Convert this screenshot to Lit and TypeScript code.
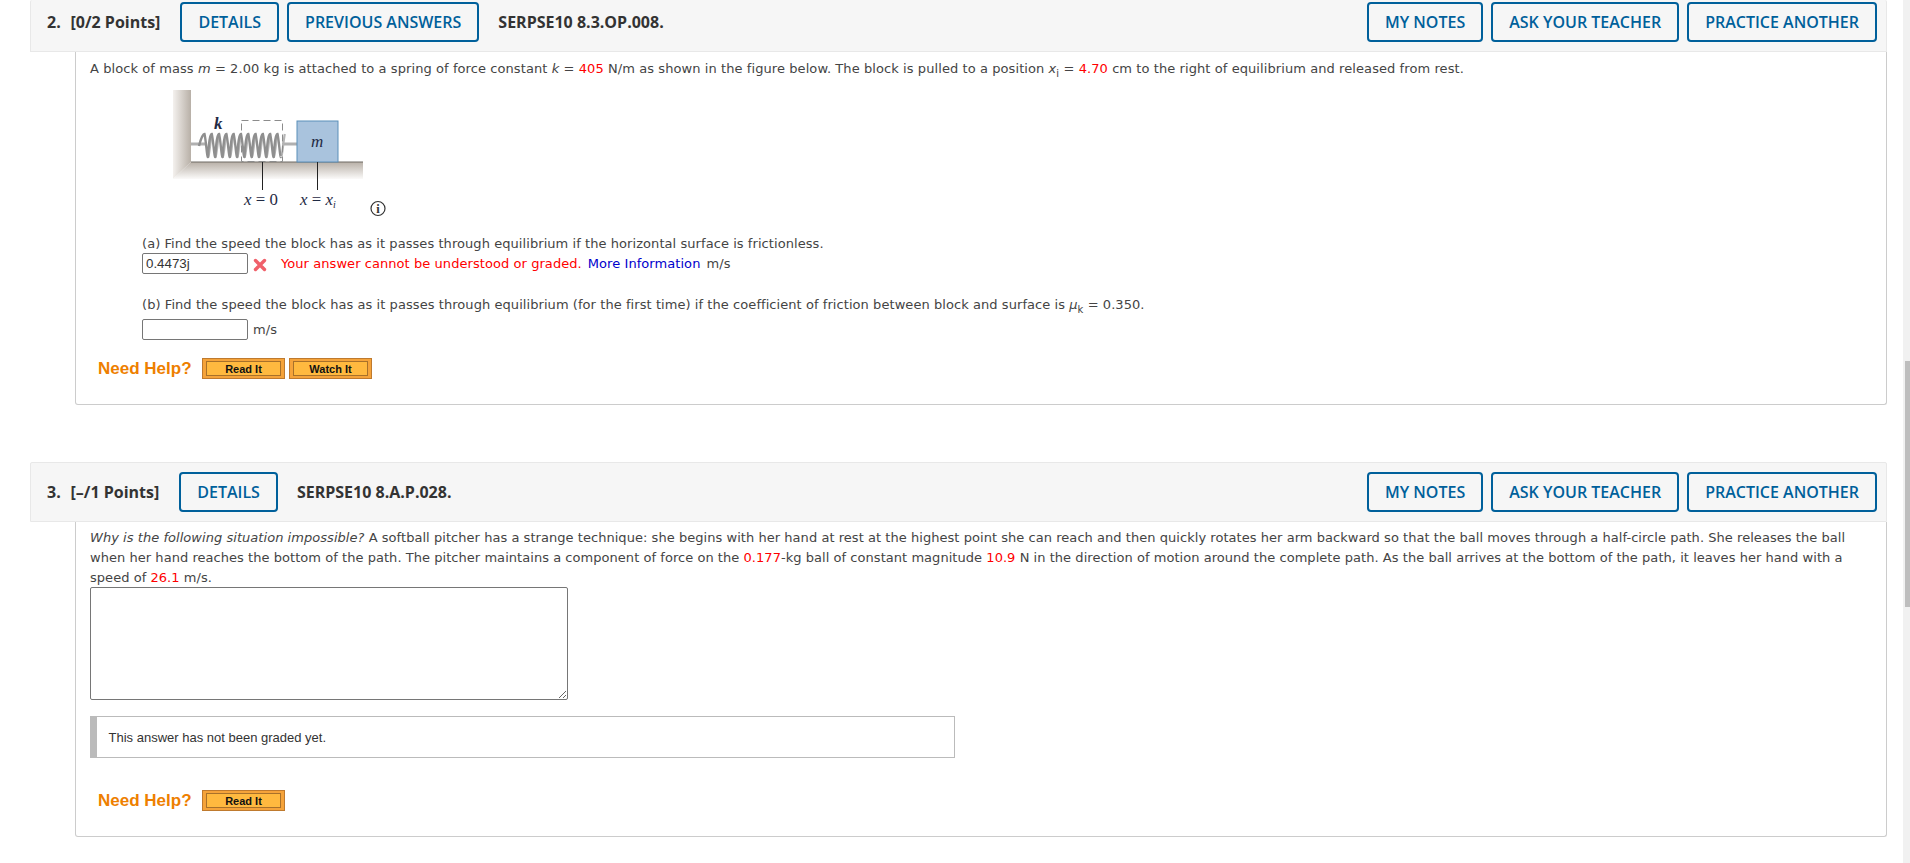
import { LitElement, html, css, svg } from "lit";
import { customElement } from "lit/decorators.js";

function coil() {
  const x0 = 203, pitch = 7.3, n = 11, top = 134, bot = 157;
  let back = "";
  let front = `M${x0 - 4} 146`;
  for (let i = 0; i < n; i++) {
    const x = x0 + i * pitch;
    front += ` C${x - 1} 134 ${x + 1} 134 ${x + 1.5} ${top} C${x + 3} 140 ${x + 4} 158 ${x + 5} ${bot} `;
    back += ` M${x + 5} ${bot} C${x + 6} 158 ${x + 7.5} 140 ${x + 8.8} ${top}`;
  }
  return { front, back };
}

@customElement("app-root")
export class AppRoot extends LitElement {
  static styles = css`
    :host { display: flex; height: 863px; overflow: hidden; background: #fff; color: #444; font-family: "DejaVu Sans", Verdana, sans-serif; font-size: 13px; letter-spacing: .065px; }
    .main { flex: 1; min-width: 0; padding: 0 16px 0 30px; box-sizing: border-box; }
    .scroll { width: 5px; padding-left: 2px; background: #f1f1f1; }
    .thumb { margin-top: 361px; height: 246px; width: 5px; background: #bebebe; }
    .hd { display: flex; align-items: center; background: #f6f6f6; border: 1px solid #e8e8e8; border-radius: 2px 2px 0 0; padding: 9px 9px 9px 16px; font-family: "Open Sans", sans-serif; color: #333; letter-spacing: 0; }
    .hd.first { border-top: 0; padding-top: 2px; }
    .num { font-weight: 700; font-size: 16px; width: 23.5px; }
    .pts { font-weight: 700; font-size: 16px; margin-right: 20px; white-space: nowrap; }
    .code { font-weight: 700; font-size: 16px; margin-left: 11px; white-space: nowrap; }
    .btn { box-sizing: border-box; height: 40px; display: flex; align-items: center; padding: 0 16px; border: 2px solid #00609b; border-radius: 4px; color: #00609b; font-weight: 600; font-size: 16px; margin-right: 8px; white-space: nowrap; }
    .right { margin-left: auto; display: flex; }
    .right .btn:last-child { margin-right: 0; }
    .body { margin-left: 45px; border: 1px solid #ccc; border-top: 0; border-radius: 0 0 3px 3px; padding: 7px 14px 25px; line-height: 20px; white-space: nowrap; }
    .body.second { padding-top: 6px; letter-spacing: .045px; }
    .lead { letter-spacing: .082px; }
    .gap { height: 57px; }
    .red { color: #f00; }
    .blue { color: #00c; }
    i { font-style: italic; }
    sub { font-size: 10px; line-height: 0; }
    .fig { display: block; margin: 6px 0 0 75px; }
    .part { margin-left: 52px; margin-bottom: -1px; }
    .part.a { margin-top: 16px; }
    .part.b { margin-top: 21px; }
    .row { display: flex; align-items: center; height: 21px; margin-left: 52px; }
    .row.b { margin-top: 5px; }
    input { box-sizing: border-box; width: 106px; height: 21px; margin: 0; padding: 1px 3px; border: 1px solid #767676; border-radius: 2px; font: 13.33px "Liberation Sans", Arial, sans-serif; color: #333; background: #fff; letter-spacing: 0; }
    .unit { margin-left: 5px; }
    .after { margin-left: 6px; }
    .x { margin: 3px 14px 0 5px; flex: none; }
    textarea { display: block; box-sizing: border-box; width: 478px; height: 113px; margin: -1px 0 0; border: 1px solid #767676; border-radius: 2px; background: #fff; }
    .msg { box-sizing: border-box; width: 865px; height: 42px; margin-top: 16px; display: flex; align-items: center; padding-left: 11.5px; border: 1px solid #bbb; border-left: 7px solid #bbb; font: 13px "Liberation Sans", Arial, sans-serif; color: #333; letter-spacing: 0; }
    .help { display: flex; align-items: center; height: 21px; margin-left: 8px; margin-top: 18px; letter-spacing: 0; }
    .help.c { margin-top: 32px; }
    .need { font: bold 17px "Liberation Sans", Arial, sans-serif; color: #ee7f00; margin-right: 11px; width: 93px; white-space: nowrap; }
    .ora { box-sizing: border-box; width: 83px; height: 21px; margin-right: 4px; border: 1px solid #bf7a2e; background: #f5a33a; padding: 2px 3px; }
    .ora span { box-sizing: border-box; display: flex; align-items: center; justify-content: center; height: 15px; border: 1px solid #a8712a; background: #ffb93f; color: #111; font: bold 11px "Liberation Sans", Arial, sans-serif; }
  `;

  figure() {
    const { front, back } = coil();
    return html`<svg class="fig" width="230" height="133" viewBox="165 85 230 133" xmlns="http://www.w3.org/2000/svg">
      <defs>
        <linearGradient id="w" x1="0" x2="1" y1="0" y2="0"><stop offset="0" stop-color="#f4f1ee"/><stop offset="1" stop-color="#b8b0a7"/></linearGradient>
        <linearGradient id="g" x1="0" x2="0" y1="0" y2="1"><stop offset="0" stop-color="#b8b0a7"/><stop offset="1" stop-color="#fbfaf9"/></linearGradient>
      </defs>
      ${svg`
        <polygon points="173,90 191,90 191,162 173,179" fill="url(#w)"/>
        <polygon points="191,162 363,162 363,179 173,179" fill="url(#g)"/>
        <line x1="191" y1="162" x2="363" y2="162" stroke="#6f6a64" stroke-width="1"/>
        <rect x="191" y="142.500" width="14" height="3" fill="#b0b0b0"/>
        <rect x="282" y="142.500" width="15" height="3" fill="#b0b0b0"/>
        <path d="${back}" fill="none" stroke="#b5b5b5" stroke-width="2.200"/>
        <path d="${front}" fill="none" stroke="#8f8f8f" stroke-width="2.400"/>
        <rect x="241.500" y="120.500" width="41" height="41" fill="none" stroke="#8c8c8c" stroke-dasharray="7 4"/>
        <rect x="297" y="121" width="41" height="41" fill="#a9c3dd" stroke="#5b8fb9"/>
        <line x1="262.500" y1="162" x2="262.500" y2="190" stroke="#222"/>
        <line x1="317.500" y1="162" x2="317.500" y2="190" stroke="#222"/>
        <g font-family="Liberation Serif, serif" fill="#1f2a44">
          <text x="214" y="129" font-size="17" font-style="italic" font-weight="700">k</text>
          <text x="311" y="147" font-size="17" font-style="italic">m</text>
          <text x="244" y="205" font-size="16.800"><tspan font-style="italic">x</tspan> = 0</text>
          <text x="300" y="205" font-size="16.800"><tspan font-style="italic">x</tspan> = <tspan font-style="italic">x</tspan><tspan font-size="10" font-style="italic" dy="3">i</tspan></text>
        </g>
        <circle cx="378" cy="208.500" r="7" fill="none" stroke="#333" stroke-width="1.200"/>
        <text x="378" y="213" font-family="Liberation Serif, serif" font-size="12.500" font-weight="700" text-anchor="middle" fill="#333">i</text>
      `}
    </svg>`;
  }

  helpRow(watch: boolean, cls = "") {
    return html`<div class="help ${cls}">
      <div class="need">Need Help?</div>
      <div class="ora"><span>Read It</span></div>
      ${watch ? html`<div class="ora"><span>Watch It</span></div>` : ""}
    </div>`;
  }

  right() {
    return html`<div class="right">
      <div class="btn">MY NOTES</div>
      <div class="btn">ASK YOUR TEACHER</div>
      <div class="btn">PRACTICE ANOTHER</div>
    </div>`;
  }

  render() {
    return html`
      <div class="main">
        <div class="hd first">
          <div class="num">2.</div>
          <div class="pts">[0/2 Points]</div>
          <div class="btn">DETAILS</div>
          <div class="btn">PREVIOUS ANSWERS</div>
          <div class="code">SERPSE10 8.3.OP.008.</div>
          ${this.right()}
        </div>
        <div class="body">
          <div class="lead">A block of mass <i>m</i> = 2.00 kg is attached to a spring of force constant <i>k</i> = <span class="red">405</span> N/m as shown in the figure below. The block is pulled to a position <i>x</i><sub>i</sub> = <span class="red">4.70</span> cm to the right of equilibrium and released from rest.</div>
          ${this.figure()}
          <div class="part a">(a) Find the speed the block has as it passes through equilibrium if the horizontal surface is frictionless.</div>
          <div class="row">
            <input .value=${"0.4473j"} />
            <svg class="x" width="14" height="14" viewBox="0 0 14 14" xmlns="http://www.w3.org/2000/svg"><path d="M2.500 2.500 L11.500 11.500 M11.500 2.500 L2.500 11.500" stroke="#f0606a" stroke-width="3.400" stroke-linecap="round"/></svg>
            <span class="red">Your answer cannot be understood or graded.</span><span class="blue after">More Information</span><span class="after">m/s</span>
          </div>
          <div class="part b">(b) Find the speed the block has as it passes through equilibrium (for the first time) if the coefficient of friction between block and surface is <i>μ</i><sub>k</sub> = 0.350.</div>
          <div class="row b"><input /><span class="unit">m/s</span></div>
          ${this.helpRow(true)}
        </div>
        <div class="gap"></div>
        <div class="hd">
          <div class="num">3.</div>
          <div class="pts">[–/1 Points]</div>
          <div class="btn">DETAILS</div>
          <div class="code">SERPSE10 8.A.P.028.</div>
          ${this.right()}
        </div>
        <div class="body second">
          <div><i>Why is the following situation impossible?</i> A softball pitcher has a strange technique: she begins with her hand at rest at the highest point she can reach and then quickly rotates her arm backward so that the ball moves through a half-circle path. She releases the ball<br />when her hand reaches the bottom of the path. The pitcher maintains a component of force on the <span class="red">0.177</span>-kg ball of constant magnitude <span class="red">10.9</span> N in the direction of motion around the complete path. As the ball arrives at the bottom of the path, it leaves her hand with a<br />speed of <span class="red">26.1</span> m/s.</div>
          <textarea></textarea>
          <div class="msg">This answer has not been graded yet.</div>
          ${this.helpRow(false, "c")}
        </div>
      </div>
      <div class="scroll"><div class="thumb"></div></div>
    `;
  }
}
